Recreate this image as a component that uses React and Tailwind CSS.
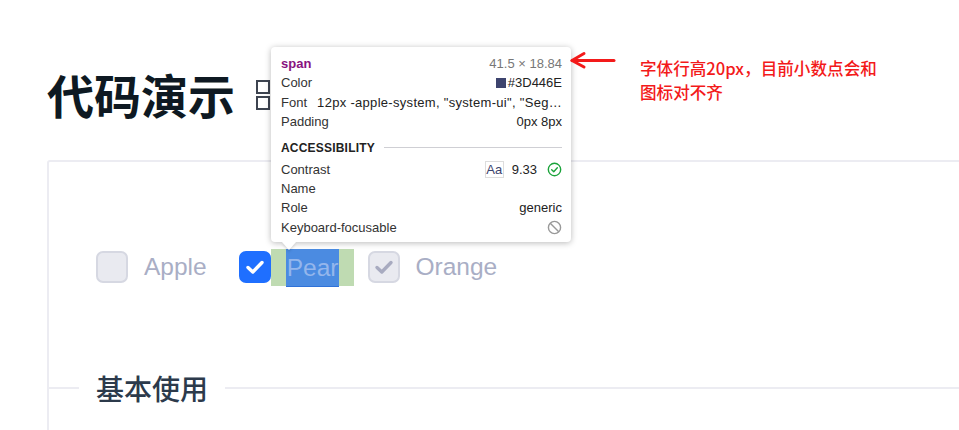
import React from 'react'

const sans = '"Liberation Sans", Arial, "Noto Sans CJK SC", sans-serif'
const cjk = '"Noto Sans CJK SC", "Liberation Sans", sans-serif'

function Box({ checked, disabled }) {
    const cls = checked && !disabled
        ? 'bg-[#1f6fff] border-[#1f6fff]'
        : 'bg-[#e9eaf0] border-[#d6d8e2]'
    return (
        <span className={`w-[32px] h-[32px] rounded-[7px] border-2 flex items-center justify-center shrink-0 ${cls}`}>
            {checked ? (
                <svg width="22" height="22" viewBox="0 0 22 22" fill="none">
                    <path d="M4 11.5 L8.8 16 L18 6.5" stroke={disabled ? '#a8abc0' : '#ffffff'} strokeWidth="3.4" strokeLinecap="round" strokeLinejoin="round" />
                </svg>
            ) : null}
        </span>
    )
}

function Row({ label, children, className = '' }) {
    return (
        <div className={`flex items-center justify-between h-[19.3px] ${className}`}>
            <span className="text-[#333]">{label}</span>
            {children}
        </div>
    )
}

export default function App() {
    return (
        <div className="relative w-[959px] h-[430px] overflow-hidden bg-white" style={{ fontFamily: sans }}>
            <div className="pl-[47px] pt-[67px]">
                {/* heading */}
                <div className="flex items-center h-[52px]">
                    <h1 className="text-[47px] leading-none font-bold text-[#0e1922]" style={{ fontFamily: cjk }}>代码演示</h1>
                    <div className="ml-[21px] mt-[4px] grid grid-cols-2 gap-[2px]">
                        <span className="w-[14px] h-[14px] border-2 border-[#3d4450]"></span>
                        <span className="w-[14px] h-[14px] border-2 border-[#3d4450]"></span>
                        <span className="w-[14px] h-[14px] border-2 border-[#3d4450]"></span>
                        <span className="w-[14px] h-[14px] border-2 border-[#3d4450]"></span>
                    </div>
                </div>

                {/* demo card */}
                <div className="mt-[41px] w-[1000px] h-[300px] border-2 border-[#ececf2] rounded-tl-[3px]">
                    <div className="pl-[47px] pt-[86px] flex items-center text-[24.5px] text-[#a9aec5]">
                        <label className="flex items-center mr-[16px]">
                            <Box />
                            <span className="px-[16px] leading-[38px]">Apple</span>
                        </label>
                        <label className="flex items-center mr-[14px]">
                            <Box checked />
                            <span className="px-[15px] bg-[#bfdbb2] h-[37px] flex">
                                <span className="bg-[#4b8be1] text-[#94b6ec] leading-[37px] h-[38px] border-b border-[#2f72d8] px-px">Pear</span>
                            </span>
                        </label>
                        <label className="flex items-center">
                            <Box checked disabled />
                            <span className="px-[15px] leading-[38px]">Orange</span>
                        </label>
                    </div>

                    <div className="mt-[88px] flex items-center">
                        <div className="w-[30px] h-[2px] bg-[#ececf2]"></div>
                        <span className="px-[17px] text-[28px] leading-none font-medium text-[#2c3a4b]" style={{ fontFamily: cjk }}>基本使用</span>
                        <div className="flex-1 h-[2px] bg-[#ececf2]"></div>
                    </div>
                </div>
            </div>

            {/* devtools inspect tooltip */}
            <div className="absolute left-[271px] top-[47px] w-[300px] h-[195px] bg-white rounded-[4px] shadow-[0_1px_6px_rgba(0,0,0,0.28)] pl-[10px] pr-[9px] pt-[6px] text-[13px]">
                <div className="flex items-center justify-between h-[20.5px]">
                    <span className="text-[#881280] font-bold">span</span>
                    <span className="text-[#777]">41.5 × 18.84</span>
                </div>
                <Row label="Color">
                    <span className="flex items-center gap-[2px] text-[#222]">
                        <span className="w-[10px] h-[10px] bg-[#3D446E]"></span>#3D446E
                    </span>
                </Row>
                <Row label="Font">
                    <span className="text-[#222] truncate ml-[10px] tracking-[0.3px]">12px -apple-system, "system-ui", "Seg…</span>
                </Row>
                <Row label="Padding">
                    <span className="text-[#222]">0px 8px</span>
                </Row>
                <div className="flex items-center h-[19px] mt-[7px]">
                    <span className="text-[12px] font-bold text-[#222] tracking-[0.2px]">ACCESSIBILITY</span>
                    <div className="flex-1 ml-[9px] h-px bg-[#cfcfd4]"></div>
                </div>
                <Row label="Contrast" className="mt-[2.5px]">
                    <span className="flex items-center text-[#222]">
                        <span className="w-[19px] h-[17px] border border-[#ddd] text-[#3D446E] flex items-center justify-center text-[13px]">Aa</span>
                        <span className="ml-[8px]">9.33</span>
                        <svg className="ml-[10px]" width="15" height="15" viewBox="0 0 16 16" fill="none">
                            <circle cx="8" cy="8" r="6.6" stroke="#1aa33a" strokeWidth="1.5" />
                            <path d="M5 8.2 L7.2 10.3 L11 6.2" stroke="#1aa33a" strokeWidth="1.5" strokeLinecap="round" strokeLinejoin="round" />
                        </svg>
                    </span>
                </Row>
                <Row label="Name" />
                <Row label="Role">
                    <span className="text-[#222]">generic</span>
                </Row>
                <Row label="Keyboard-focusable">
                    <svg width="15" height="15" viewBox="0 0 16 16" fill="none">
                        <circle cx="8" cy="8" r="6.5" stroke="#999" strokeWidth="1.5" />
                        <path d="M3.5 3.5 L12.5 12.5" stroke="#999" strokeWidth="1.5" />
                    </svg>
                </Row>
                <div className="absolute left-[11px] -bottom-[8px] w-0 h-0 border-l-[7px] border-r-[7px] border-t-[8px] border-l-transparent border-r-transparent border-t-white drop-shadow-[0_2px_1px_rgba(0,0,0,0.12)]"></div>
            </div>

            {/* red annotation */}
            <svg className="absolute left-[568px] top-[50px]" width="50" height="22" viewBox="0 0 50 22" fill="none">
                <path d="M4 10.5 L46 10.5" stroke="#f31a1a" strokeWidth="3" strokeLinecap="round" />
                <path d="M16 3.5 L4 10.5 L16 17" stroke="#f31a1a" strokeWidth="3" strokeLinecap="round" strokeLinejoin="round" />
            </svg>
            <div className="absolute left-[640px] top-[56px] text-[16.6px] leading-[24px] text-[#f31a1a] font-medium" style={{ fontFamily: cjk }}>
                <div>字体行高20px，目前小数点会和</div>
                <div>图标对不齐</div>
            </div>
        </div>
    )
}
